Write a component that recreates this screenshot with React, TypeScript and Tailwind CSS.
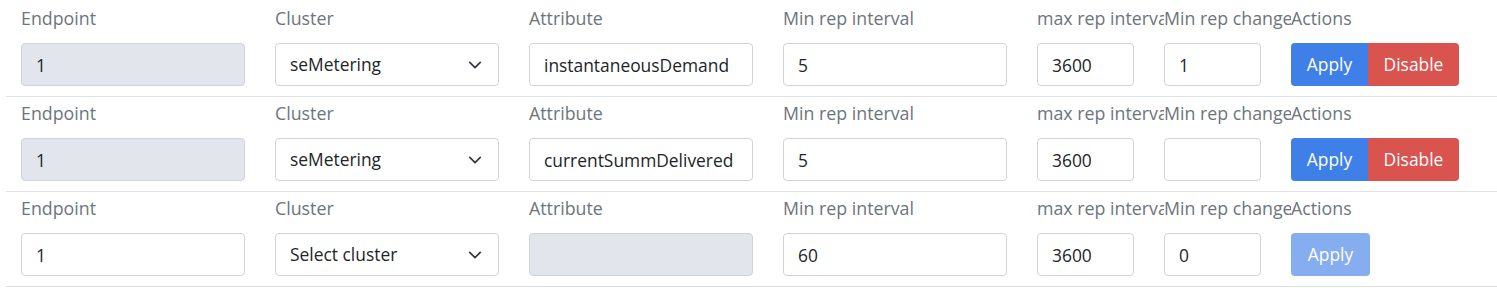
import React from 'react';

interface ReportRow {
  endpoint: string;
  cluster: string;
  attribute: string;
  minInterval: string;
  maxInterval: string;
  minChange: string;
  configured: boolean;
}

const rows: ReportRow[] = [
  { endpoint: '1', cluster: 'seMetering', attribute: 'instantaneousDemand', minInterval: '5', maxInterval: '3600', minChange: '1', configured: true },
  { endpoint: '1', cluster: 'seMetering', attribute: 'currentSummDelivered', minInterval: '5', maxInterval: '3600', minChange: '', configured: true },
  { endpoint: '1', cluster: '', attribute: '', minInterval: '60', maxInterval: '3600', minChange: '0', configured: false },
];

const inputBase =
  'h-[43px] w-full rounded-[4px] border border-[#ced4da] px-[14px] text-[17.4px] text-[#212529] outline-none';

function Cell({ label, wide, children }: { label: string; wide?: boolean; children: React.ReactNode }) {
  return (
    <div className={`${wide ? 'w-[254px]' : 'w-[127px]'} shrink-0 overflow-hidden pr-[30px]`}>
      <div className="whitespace-nowrap text-[17.8px] leading-[27px] text-[#6c757d]">{label}</div>
      <div className="mt-[11px]">{children}</div>
    </div>
  );
}

function ClusterSelect({ value }: { value: string }) {
  return (
    <div className="relative">
      <select
        defaultValue={value}
        className={`${inputBase} appearance-none bg-white pr-[40px]`}
      >
        <option value="">Select cluster</option>
        <option value="seMetering">seMetering</option>
      </select>
      {/* chevron */}
      <svg
        className="pointer-events-none absolute right-[15px] top-1/2 -translate-y-1/2"
        width="18"
        height="14"
        viewBox="0 0 16 16"
        fill="none"
        stroke="#343a40"
        strokeWidth="2"
        strokeLinecap="round"
        strokeLinejoin="round"
      >
        <path d="m2 5 6 6 6-6" />
      </svg>
    </div>
  );
}

function Row({ row }: { row: ReportRow }) {
  return (
    <div className="flex border-b border-[#dee2e6] pb-[10px] pl-[15px] pt-[3px]">
      <Cell label="Endpoint" wide>
        <input
          defaultValue={row.endpoint}
          disabled={row.configured}
          className={`${inputBase} ${row.configured ? 'bg-[#e2e6ec]' : 'bg-white'}`}
        />
      </Cell>
      <Cell label="Cluster" wide>
        <ClusterSelect value={row.cluster} />
      </Cell>
      <Cell label="Attribute" wide>
        <input
          defaultValue={row.attribute}
          disabled={!row.cluster}
          className={`${inputBase} ${row.cluster ? 'bg-white' : 'bg-[#e2e6ec]'}`}
        />
      </Cell>
      <Cell label="Min rep interval" wide>
        <input defaultValue={row.minInterval} className={`${inputBase} bg-white`} />
      </Cell>
      <Cell label="max rep interval">
        <input defaultValue={row.maxInterval} className={`${inputBase} bg-white`} />
      </Cell>
      <Cell label="Min rep change">
        <input defaultValue={row.minChange} className={`${inputBase} bg-white`} />
      </Cell>
      <div className="shrink-0">
        <div className="whitespace-nowrap text-[17.8px] leading-[27px] text-[#6c757d]">Actions</div>
        <div className="mt-[11px] flex">
          {row.configured ? (
            <>
              <button className="h-[43px] w-[77px] rounded-l-[4px] bg-[#3f80e8] text-[17.4px] text-white">Apply</button>
              <button className="h-[43px] w-[91px] rounded-r-[4px] bg-[#d9534f] text-[17.4px] text-white">Disable</button>
            </>
          ) : (
            <button className="h-[43px] w-[79px] rounded-[4px] bg-[#86adf0] text-[17.4px] text-white">Apply</button>
          )}
        </div>
      </div>
    </div>
  );
}

export default function App() {
  return (
    <div className="min-h-[304px] bg-white pl-[6px] pt-[2px] font-['Open_Sans',sans-serif]">
      {rows.map((row, i) => (
        <Row key={i} row={row} />
      ))}
    </div>
  );
}
